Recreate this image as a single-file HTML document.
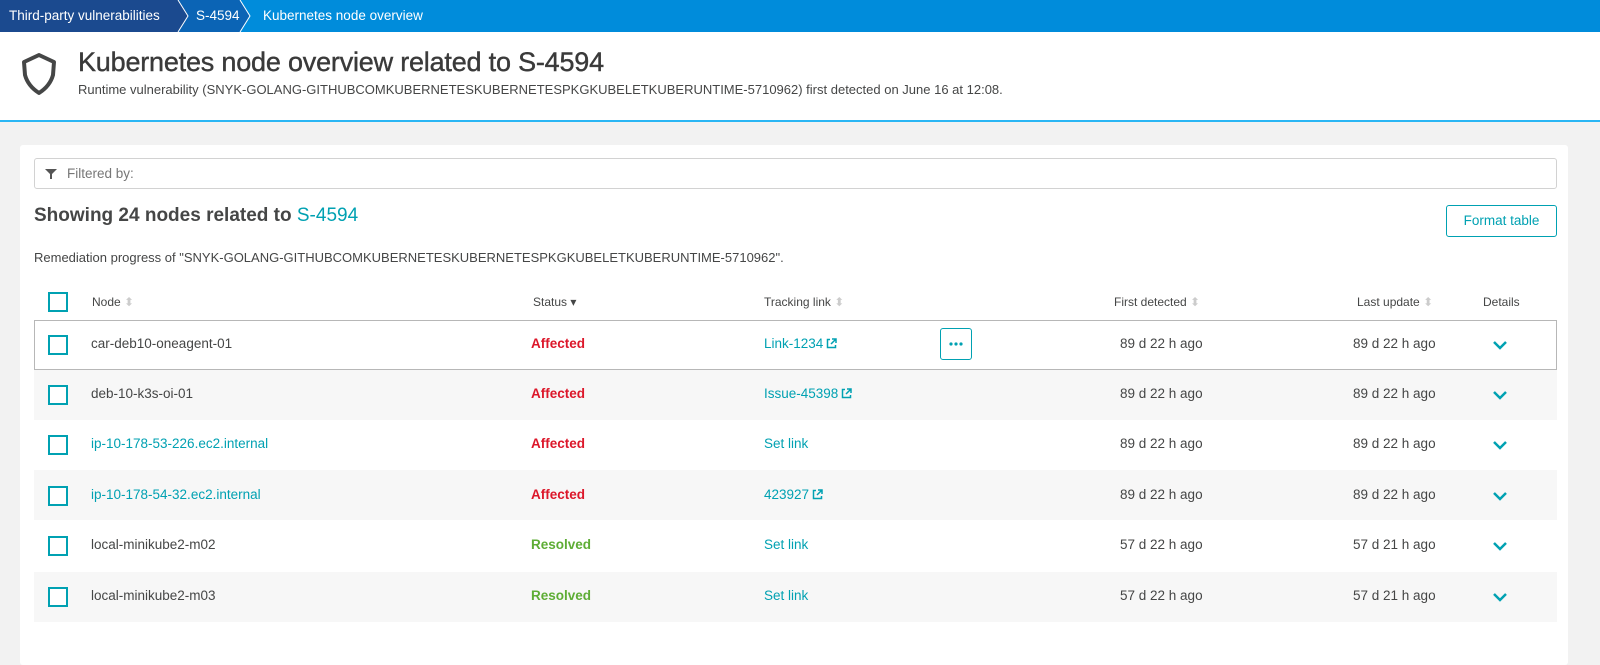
<!DOCTYPE html>
<html><head><style>
*{box-sizing:border-box;margin:0;padding:0}
body{width:1600px;height:645px;overflow:hidden;background:#f2f2f2;font-family:"Liberation Sans",sans-serif;color:#454646;position:relative}
.bc{position:absolute;top:0;left:0;width:1600px;height:32px;background:#008cdb;}
.bc span{position:absolute;top:8px;color:#fff;font-size:13.5px;}
.hdr{position:absolute;top:32px;left:0;width:1600px;height:90px;background:#fff;border-bottom:2px solid #2ab6f4}
h1{position:absolute;left:78px;top:15px;font-size:27px;font-weight:normal;color:#3a3a3a;letter-spacing:-0.2px;-webkit-text-stroke:0.4px #3a3a3a}
.sub{position:absolute;left:78px;top:50px;font-size:13px;color:#454646}
.card{position:absolute;left:20px;top:145px;width:1548px;height:520px;background:#fff;border-radius:3px}
.abs{position:absolute}
.filter{left:34px;top:158px;width:1523px;height:31px;border:1px solid #d2d2d2;border-radius:3px;background:#fff}
.cb{position:absolute;left:48px;width:20px;height:20px;border:2px solid #00a1b2;background:#fff}
.row{position:absolute;left:34px;width:1523px;height:50px}
.t{position:absolute;font-size:13.5px}
.th{position:absolute;top:295px;font-size:12px;color:#454646}
.red{color:#dc172a;font-weight:bold}
.grn{color:#5ead35;font-weight:bold}
.lnk{color:#00a1b2}
.chev{position:absolute;left:1493px;width:14px;height:10px}
.ext{display:inline-block;vertical-align:-1px;margin-left:3px}
</style></head><body>
<div class="bc">
<svg width="620" height="32" style="position:absolute;left:0;top:0"><polygon points="0,0 178,0 188,16 178,32 0,32" fill="#1b4a8f"/><polygon points="178,0 240,0 250,16 240,32 178,32 188,16" fill="#0b64b5"/><polyline points="178,0 188,16 178,32" stroke="#fff" fill="none" stroke-width="1"/><polyline points="240,0 250,16 240,32" stroke="#fff" fill="none" stroke-width="1"/></svg>
<span style="left:9px">Third-party vulnerabilities</span>
<span style="left:196px">S-4594</span>
<span style="left:263px">Kubernetes node overview</span>
</div>
<div class="hdr">
<svg width="40" height="46" style="position:absolute;left:20px;top:19px" viewBox="0 0 40 46"><path d="M19,4 L34,11 L33,24 Q30,35 19,42 Q8,35 5,24 L4,11 Z" fill="none" stroke="#454646" stroke-width="4" stroke-linejoin="round"/></svg>
<h1>Kubernetes node overview related to S-4594</h1>
<div class="sub">Runtime vulnerability (SNYK-GOLANG-GITHUBCOMKUBERNETESKUBERNETESPKGKUBELETKUBERUNTIME-5710962) first detected on June 16 at 12:08.</div>
</div>
<div class="card"></div>
<div class="abs filter"><svg width="12" height="12" style="position:absolute;left:10px;top:9px" viewBox="0 0 12 12"><path d="M0,1 H12 L7,6 V11 L5,11 V6 Z" fill="#555"/></svg><span style="position:absolute;left:32px;top:7px;font-size:13.5px;color:#777">Filtered by:</span></div>
<div class="abs" style="left:34px;top:205px;font-size:19px;font-weight:bold;color:#454646">Showing 24 nodes related to <span style="color:#00a1b2;font-weight:normal">S-4594</span></div>
<div class="abs" style="left:1446px;top:205px;width:111px;height:32px;border:1px solid #00a1b2;border-radius:3px;color:#00a1b2;font-size:13.5px;text-align:center;line-height:30px">Format table</div>
<div class="abs" style="left:34px;top:250px;font-size:13px">Remediation progress of "SNYK-GOLANG-GITHUBCOMKUBERNETESKUBERNETESPKGKUBELETKUBERUNTIME-5710962".</div>

<div class="cb" style="top:292px"></div>
<div class="th" style="left:92px">Node <span style="color:#ccc">⬍</span></div>
<div class="th" style="left:533px">Status ▾</div>
<div class="th" style="left:764px">Tracking link <span style="color:#ccc">⬍</span></div>
<div class="th" style="left:1114px">First detected <span style="color:#ccc">⬍</span></div>
<div class="th" style="left:1357px">Last update <span style="color:#ccc">⬍</span></div>
<div class="th" style="left:1483px">Details</div>

<div class="row" style="top:320px;border:1px solid #b7b7b7;background:#fff"></div>
<div class="row" style="top:370px;background:#f7f7f7"></div>
<div class="row" style="top:420px;background:#fff"></div>
<div class="row" style="top:470px;background:#f7f7f7"></div>
<div class="row" style="top:520px;background:#fff"></div>
<div class="row" style="top:572px;background:#f7f7f7"></div>

<div class="abs" style="left:940px;top:328px;width:32px;height:32px;border:1px solid #00a1b2;border-radius:3px;background:#fff">
<svg width="30" height="30" viewBox="0 0 30 30" style="position:absolute;left:0;top:0"><circle cx="10" cy="15" r="1.6" fill="#00a1b2"/><circle cx="15" cy="15" r="1.6" fill="#00a1b2"/><circle cx="20" cy="15" r="1.6" fill="#00a1b2"/></svg></div>

<div class="cb" style="top:335px"></div><div class="t" style="left:91px;top:336px">car-deb10-oneagent-01</div><div class="t red" style="left:531px;top:336px">Affected</div><div class="t lnk" style="left:764px;top:336px">Link-1234<svg class="ext" width="11" height="11" viewBox="0 0 11 11"><path d="M4,1.5 H1.5 V9.5 H9.5 V7 M6,1 H10 V5 M10,1 L5,6" fill="none" stroke="#00a1b2" stroke-width="1.5"/></svg></div><div class="t" style="left:1120px;top:336px">89 d 22 h ago</div><div class="t" style="left:1353px;top:336px">89 d 22 h ago</div>
<div class="cb" style="top:385px"></div><div class="t" style="left:91px;top:386px">deb-10-k3s-oi-01</div><div class="t red" style="left:531px;top:386px">Affected</div><div class="t lnk" style="left:764px;top:386px">Issue-45398<svg class="ext" width="11" height="11" viewBox="0 0 11 11"><path d="M4,1.5 H1.5 V9.5 H9.5 V7 M6,1 H10 V5 M10,1 L5,6" fill="none" stroke="#00a1b2" stroke-width="1.5"/></svg></div><div class="t" style="left:1120px;top:386px">89 d 22 h ago</div><div class="t" style="left:1353px;top:386px">89 d 22 h ago</div>
<div class="cb" style="top:435px"></div><div class="t lnk" style="left:91px;top:436px">ip-10-178-53-226.ec2.internal</div><div class="t red" style="left:531px;top:436px">Affected</div><div class="t lnk" style="left:764px;top:436px">Set link</div><div class="t" style="left:1120px;top:436px">89 d 22 h ago</div><div class="t" style="left:1353px;top:436px">89 d 22 h ago</div>
<div class="cb" style="top:486px"></div><div class="t lnk" style="left:91px;top:487px">ip-10-178-54-32.ec2.internal</div><div class="t red" style="left:531px;top:487px">Affected</div><div class="t lnk" style="left:764px;top:487px">423927<svg class="ext" width="11" height="11" viewBox="0 0 11 11"><path d="M4,1.5 H1.5 V9.5 H9.5 V7 M6,1 H10 V5 M10,1 L5,6" fill="none" stroke="#00a1b2" stroke-width="1.5"/></svg></div><div class="t" style="left:1120px;top:487px">89 d 22 h ago</div><div class="t" style="left:1353px;top:487px">89 d 22 h ago</div>
<div class="cb" style="top:536px"></div><div class="t" style="left:91px;top:537px">local-minikube2-m02</div><div class="t grn" style="left:531px;top:537px">Resolved</div><div class="t lnk" style="left:764px;top:537px">Set link</div><div class="t" style="left:1120px;top:537px">57 d 22 h ago</div><div class="t" style="left:1353px;top:537px">57 d 21 h ago</div>
<div class="cb" style="top:587px"></div><div class="t" style="left:91px;top:588px">local-minikube2-m03</div><div class="t grn" style="left:531px;top:588px">Resolved</div><div class="t lnk" style="left:764px;top:588px">Set link</div><div class="t" style="left:1120px;top:588px">57 d 22 h ago</div><div class="t" style="left:1353px;top:588px">57 d 21 h ago</div>

<svg class="chev" style="top:340px" viewBox="0 0 14 10"><polyline points="1,2 7,8 13,2" fill="none" stroke="#00a1b2" stroke-width="2.5"/></svg>
<svg class="chev" style="top:390px" viewBox="0 0 14 10"><polyline points="1,2 7,8 13,2" fill="none" stroke="#00a1b2" stroke-width="2.5"/></svg>
<svg class="chev" style="top:440px" viewBox="0 0 14 10"><polyline points="1,2 7,8 13,2" fill="none" stroke="#00a1b2" stroke-width="2.5"/></svg>
<svg class="chev" style="top:491px" viewBox="0 0 14 10"><polyline points="1,2 7,8 13,2" fill="none" stroke="#00a1b2" stroke-width="2.5"/></svg>
<svg class="chev" style="top:541px" viewBox="0 0 14 10"><polyline points="1,2 7,8 13,2" fill="none" stroke="#00a1b2" stroke-width="2.5"/></svg>
<svg class="chev" style="top:592px" viewBox="0 0 14 10"><polyline points="1,2 7,8 13,2" fill="none" stroke="#00a1b2" stroke-width="2.5"/></svg>
</body></html>
